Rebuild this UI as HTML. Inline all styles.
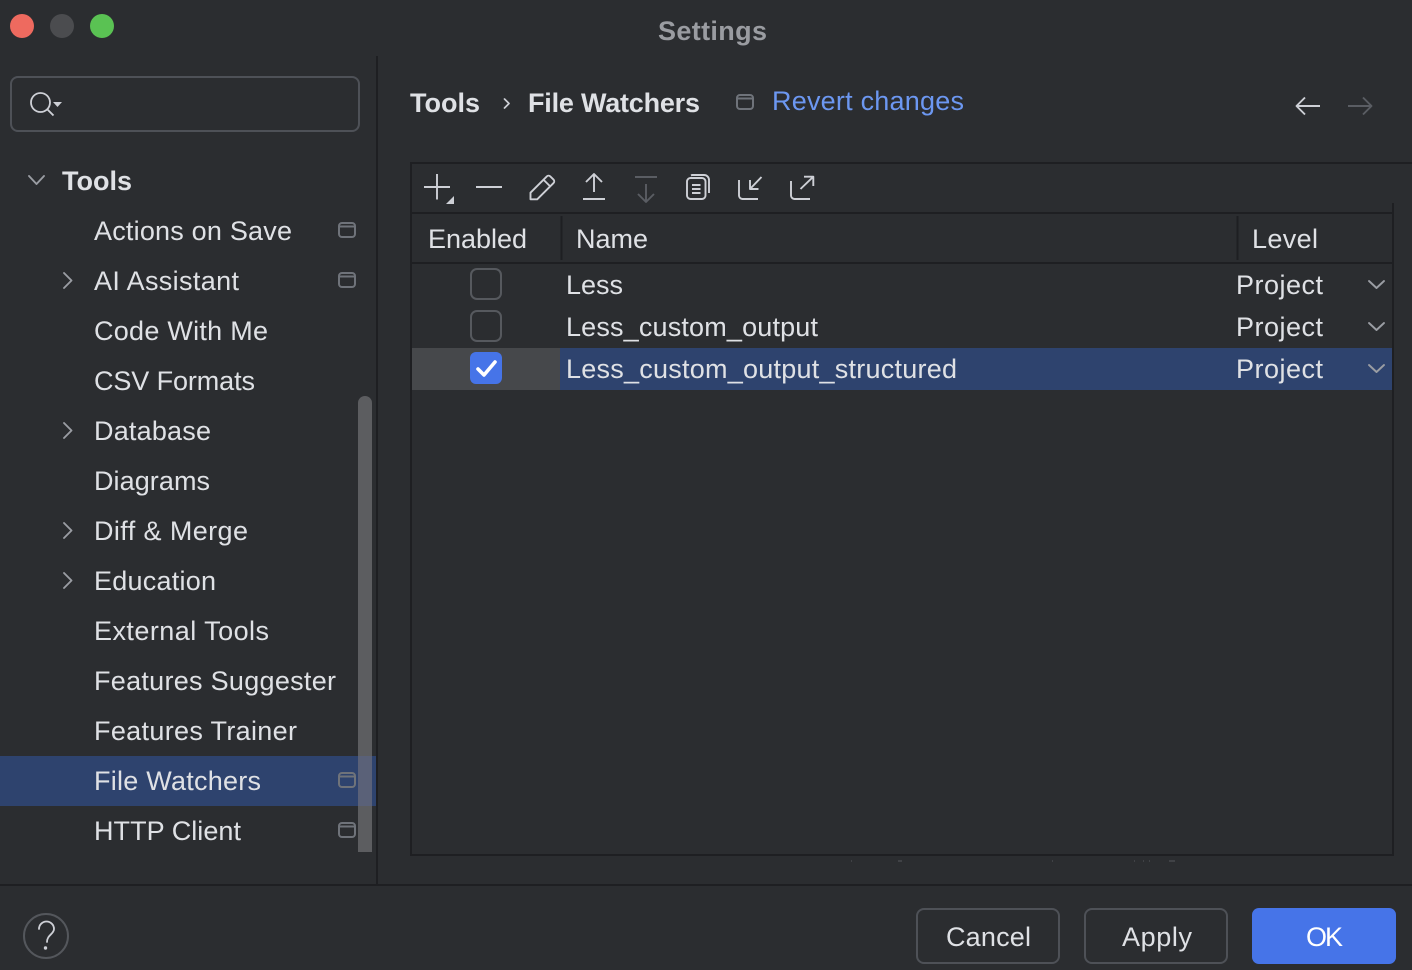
<!DOCTYPE html>
<html><head><meta charset="utf-8"><style>
html,body{margin:0;padding:0;background:#2b2d30;width:1412px;height:970px;overflow:hidden}
svg{display:block}
text{font-family:"Liberation Sans",sans-serif;font-size:27px;fill:#dfe1e5}
.b{font-weight:bold}
.i{fill:none;stroke:#ced0d6;stroke-width:1.9;stroke-linejoin:round}
.d{fill:none;stroke:#5a5d63;stroke-width:1.9;stroke-linejoin:round}
.m{fill:none;stroke:#6f737a;stroke-width:2}
.c{fill:none;stroke:#9a9da3;stroke-width:1.9;stroke-linecap:round;stroke-linejoin:round}
</style></head><body>
<svg width="1412" height="970" viewBox="0 0 1412 970" xmlns="http://www.w3.org/2000/svg">
<rect width="1412" height="970" fill="#2b2d30"/>
<!-- traffic lights -->
<circle cx="22" cy="26" r="12" fill="#ee6a5f"/>
<circle cx="62" cy="26" r="12" fill="#4b4c4f"/>
<circle cx="102" cy="26" r="12" fill="#5ac253"/>
<text x="658" y="40" class="b" style="fill:#9a9ca1;font-size:27px" textLength="109" lengthAdjust="spacing">Settings</text>
<!-- dividers -->
<rect x="376" y="56" width="2" height="828" fill="#1e1f22"/>
<rect x="0" y="884" width="1412" height="2" fill="#1e1f22"/>
<!-- search -->
<rect x="11" y="77" width="348" height="54" rx="7" fill="none" stroke="#4e5157" stroke-width="2"/>
<circle cx="40.500" cy="102.500" r="9.500" fill="none" stroke="#ced0d6" stroke-width="1.800"/>
<path d="M47.500 109.500L53.500 115.500" class="i"/>
<path d="M53 102h9l-4.500 5z" fill="#ced0d6"/>
<!-- selection -->
<rect x="0" y="756" width="376" height="50" fill="#2e436e"/>
<!-- scrollbar -->
<path d="M358 852V403a7 7 0 0 1 14 0V852z" fill="#5c5d60"/>
<rect x="358" y="756" width="14" height="50" fill="#5a6178"/>
<!-- tree -->
<path d="M29 176l7.500 8 7.500-8" class="c"/>
<text x="62" y="190" class="b" textLength="70" lengthAdjust="spacing">Tools</text>
<text x="94" y="240" textLength="198" lengthAdjust="spacing">Actions on Save</text>
<text x="94" y="290" textLength="145" lengthAdjust="spacing">AI Assistant</text>
<text x="94" y="340" textLength="174" lengthAdjust="spacing">Code With Me</text>
<text x="94" y="390" textLength="161" lengthAdjust="spacing">CSV Formats</text>
<text x="94" y="440" textLength="117" lengthAdjust="spacing">Database</text>
<text x="94" y="490" textLength="116" lengthAdjust="spacing">Diagrams</text>
<text x="94" y="540" textLength="154" lengthAdjust="spacing">Diff &amp; Merge</text>
<text x="94" y="590" textLength="122" lengthAdjust="spacing">Education</text>
<text x="94" y="640" textLength="175" lengthAdjust="spacing">External Tools</text>
<text x="94" y="690" textLength="242" lengthAdjust="spacing">Features Suggester</text>
<text x="94" y="740" textLength="203" lengthAdjust="spacing">Features Trainer</text>
<text x="94" y="790" textLength="167" lengthAdjust="spacing">File Watchers</text>
<text x="94" y="840" textLength="147" lengthAdjust="spacing">HTTP Client</text>
<!-- tree chevrons -->
<path d="M64 273l7.500 7.500-7.500 7.500" class="c"/>
<path d="M64 423l7.500 7.500-7.500 7.500" class="c"/>
<path d="M64 523l7.500 7.500-7.500 7.500" class="c"/>
<path d="M64 573l7.500 7.500-7.500 7.500" class="c"/>
<!-- project icons -->
<g class="m">
<rect x="339" y="223" width="16" height="14" rx="3"/><path d="M339 226.500h16"/>
<rect x="339" y="273" width="16" height="14" rx="3"/><path d="M339 276.500h16"/>
<rect x="339" y="773" width="16" height="14" rx="3"/><path d="M339 776.500h16"/>
<rect x="339" y="823" width="16" height="14" rx="3"/><path d="M339 826.500h16"/>
<rect x="737" y="95" width="16" height="14" rx="3"/><path d="M737 98.500h16"/>
</g>
<!-- breadcrumb -->
<text x="410" y="112" class="b" textLength="70" lengthAdjust="spacing">Tools</text>
<path d="M504.500 99l4.500 4.500-4.500 4.500" fill="none" stroke="#ced0d6" stroke-width="1.700" stroke-linecap="round" stroke-linejoin="round"/>
<text x="528" y="112" class="b" textLength="172" lengthAdjust="spacing">File Watchers</text>
<text x="772" y="110" style="fill:#6c97f1" textLength="192" lengthAdjust="spacing">Revert changes</text>
<path d="M1320 106h-23M1305 97.500l-8.500 8.500 8.500 8.500" class="i"/>
<path d="M1348 106h23M1363 97.500l8.500 8.500-8.500 8.500" class="d"/>
<!-- table frame -->
<path d="M1412 163H411V855H1393V203" fill="none" stroke="#1e1f22" stroke-width="2"/>
<rect x="412" y="212" width="980" height="2" fill="#1e1f22"/>
<rect x="412" y="262" width="980" height="2" fill="#1e1f22"/>
<rect x="560.500" y="216" width="2" height="44" fill="#1e1f22"/>
<rect x="1236.500" y="216" width="2" height="44" fill="#1e1f22"/>
<!-- toolbar -->
<path d="M424 187h26M437 174v25.500" class="i"/>
<path d="M454 196v8h-8z" fill="#ced0d6"/>
<path d="M476 187h26" class="i"/>
<path d="M530.500 199.300v-6.600l16.300-16.300a2.500 2.500 0 0 1 3.500 0l3.200 3.200a2.500 2.500 0 0 1 0 3.500l-16.300 16.200zM543.300 179.500l7 7" class="i"/>
<path d="M583 199h22M594 192v-17M586 182l8-8 8 8" class="i"/>
<path d="M635 177h22M646 184v17M638 194l8 8 8-8" class="d"/>
<rect x="687" y="178" width="18.500" height="21" rx="3.500" class="i"/>
<path d="M692 185h8.500M692 189h8.500M692 193h8.500" class="i"/>
<path d="M691 175.500l1-.5h12a5 5 0 0 1 5 5v13" class="i"/>
<path d="M739 180v15.500a3.500 3.500 0 0 0 3.500 3.500h15.500M761.500 177l-11.500 12M750 180v9h8.500" class="i"/>
<path d="M791 181v14.500a3.500 3.500 0 0 0 3.500 3.500h15.500M800.500 189l12.800-12.300M804 176.700h9.300v9.300" class="i"/>
<!-- header -->
<text x="428" y="248" textLength="99" lengthAdjust="spacing">Enabled</text>
<text x="576" y="248" textLength="72" lengthAdjust="spacing">Name</text>
<text x="1252" y="248" textLength="66" lengthAdjust="spacing">Level</text>
<!-- rows -->
<rect x="412" y="348" width="148" height="42" fill="#46484b"/>
<rect x="560" y="348" width="832" height="42" fill="#2e436e"/>
<rect x="471" y="269" width="30" height="30" rx="6" fill="none" stroke="#56595e" stroke-width="2"/>
<rect x="471" y="311" width="30" height="30" rx="6" fill="none" stroke="#56595e" stroke-width="2"/>
<rect x="470" y="352" width="32" height="32" rx="6" fill="#4674e8"/>
<path d="M478 369l6 6 11-13" fill="none" stroke="#fff" stroke-width="3.600" stroke-linecap="round" stroke-linejoin="round"/>
<text x="566" y="294" textLength="57" lengthAdjust="spacing">Less</text>
<text x="566" y="336" textLength="252" lengthAdjust="spacing">Less_custom_output</text>
<text x="566" y="378" textLength="391" lengthAdjust="spacing">Less_custom_output_structured</text>
<text x="1236" y="294" textLength="87" lengthAdjust="spacing">Project</text>
<text x="1236" y="336" textLength="87" lengthAdjust="spacing">Project</text>
<text x="1236" y="378" textLength="87" lengthAdjust="spacing">Project</text>
<path d="M1369 281l7.500 7 7.500-7M1369 323l7.500 7 7.500-7M1369 365l7.500 7 7.500-7" class="c"/>
<!-- specks -->
<path d="M851 861h1M898 861h4M1052 861h1M1134 861h1M1143 861h1M1149 861h1M1169 861h6" stroke="#55585d" stroke-width="1" fill="none"/>
<!-- help -->
<circle cx="46" cy="936" r="22" fill="none" stroke="#54575c" stroke-width="2"/>
<path d="M39 929a7.500 7.500 0 0 1 15 0c0 5-7 6-7 13" fill="none" stroke="#ced0d6" stroke-width="1.800" stroke-linecap="round"/>
<circle cx="45.500" cy="948" r="1.700" fill="#ced0d6"/>
<!-- buttons -->
<rect x="917" y="909" width="142" height="54" rx="7" fill="none" stroke="#4e5157" stroke-width="2"/>
<rect x="1085" y="909" width="142" height="54" rx="7" fill="none" stroke="#4e5157" stroke-width="2"/>
<rect x="1252" y="908" width="144" height="56" rx="7" fill="#4674e8"/>
<text x="946" y="946" textLength="85" lengthAdjust="spacing">Cancel</text>
<text x="1122" y="946" textLength="70" lengthAdjust="spacing">Apply</text>
<text x="1306" y="946" style="fill:#fff" textLength="37" lengthAdjust="spacing">OK</text>
</svg>
</body></html>
